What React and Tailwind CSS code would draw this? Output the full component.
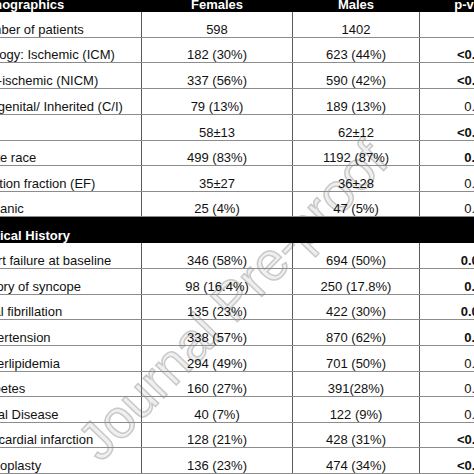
import React from "react";

const rows = [
  { type: "head", cells: ["Demographics", "Females", "Males", "p-value"], tall: true },
  { cells: ["Number of patients", "598", "1402", ""], tall: true },
  { cells: ["Etiology: Ischemic (ICM)", "182 (30%)", "623 (44%)", "<0.001"], bold: true },
  { cells: ["Non-ischemic (NICM)", "337 (56%)", "590 (42%)", "<0.001"], bold: true, tall: true },
  { cells: ["Congenital/ Inherited (C/I)", "79 (13%)", "189 (13%)", "0.82"], tall: true },
  { cells: ["Age", "58±13", "62±12", "<0.001"], bold: true, tall: true },
  { cells: ["White race", "499 (83%)", "1192 (87%)", "0.02"], bold: true },
  { cells: ["Ejection fraction (EF)", "35±27", "36±28", "0.55"], tall: true },
  { cells: ["Hispanic", "25 (4%)", "47 (5%)", "0.42"] },
  { type: "section", cells: ["Medical History", "", "", ""], tall: true },
  { cells: ["Heart failure at baseline", "346 (58%)", "694 (50%)", "0.001"], bold: true, tall: true },
  { cells: ["History of syncope", "98 (16.4%)", "250 (17.8%)", "0.04"], bold: true, tall: true },
  { cells: ["Atrial fibrillation", "135 (23%)", "422 (30%)", "0.003"], bold: true },
  { cells: ["Hypertension", "338 (57%)", "870 (62%)", "0.03"], bold: true, tall: true },
  { cells: ["Hyperlipidemia", "294 (49%)", "701 (50%)", "0.72"], tall: true },
  { cells: ["Diabetes", "160 (27%)", "391(28%)", "0.61"] },
  { cells: ["Renal Disease", "40 (7%)", "122 (9%)", "0.12"], tall: true },
  { cells: ["Myocardial infarction", "128 (21%)", "428 (31%)", "<0.001"], bold: true },
  { cells: ["Angioplasty", "136 (23%)", "474 (34%)", "<0.001"], bold: true, tall: true },
];

function Row({ row }) {
  const dark = row.type === "head" || row.type === "section";
  const height = row.tall ? "h-[26px]" : "h-[25px]";
  const rowCls = dark
    ? "bg-black text-white font-bold"
    : "text-[#111] border-b border-[#8c8c8c]";
  const divider = dark ? "border-r border-black" : "border-r border-[#5a5a5a]";

  return (
    <div className={`grid grid-cols-[172px_151px_127px_114px] ${height} ${rowCls}`}>
      <div className={`flex items-end pl-[4px] whitespace-nowrap ${divider}`}>
        {row.cells[0]}
      </div>
      <div className={`flex items-end justify-center whitespace-nowrap ${divider}`}>
        {row.cells[1]}
      </div>
      <div className={`flex items-end justify-center whitespace-nowrap ${divider}`}>
        {row.cells[2]}
      </div>
      <div
        className={`flex items-end justify-center whitespace-nowrap ${
          row.bold ? "font-bold" : ""
        }`}>
        {row.cells[3]}
      </div>
    </div>
  );
}

export default function App() {
  return (
    <div className="relative w-[474px] h-[474px] overflow-hidden bg-white font-['Liberation_Sans',Arial,sans-serif] text-[13px] leading-[14px]">
      {/* watermark sits behind the table rows */}
      <div className="pointer-events-none absolute left-[232px] top-[300px] -translate-x-1/2 -translate-y-1/2 -rotate-[46deg] whitespace-nowrap text-[54px] leading-none text-[#efefef] [-webkit-text-stroke:1.5px_#c9c9c9]">
        Journal Pre-proof
      </div>
      <div className="relative ml-[-30px] mt-[-14px] w-[564px]">
        {rows.map((row, i) => (
          <Row key={i} row={row} />
        ))}
      </div>
    </div>
  );
}
